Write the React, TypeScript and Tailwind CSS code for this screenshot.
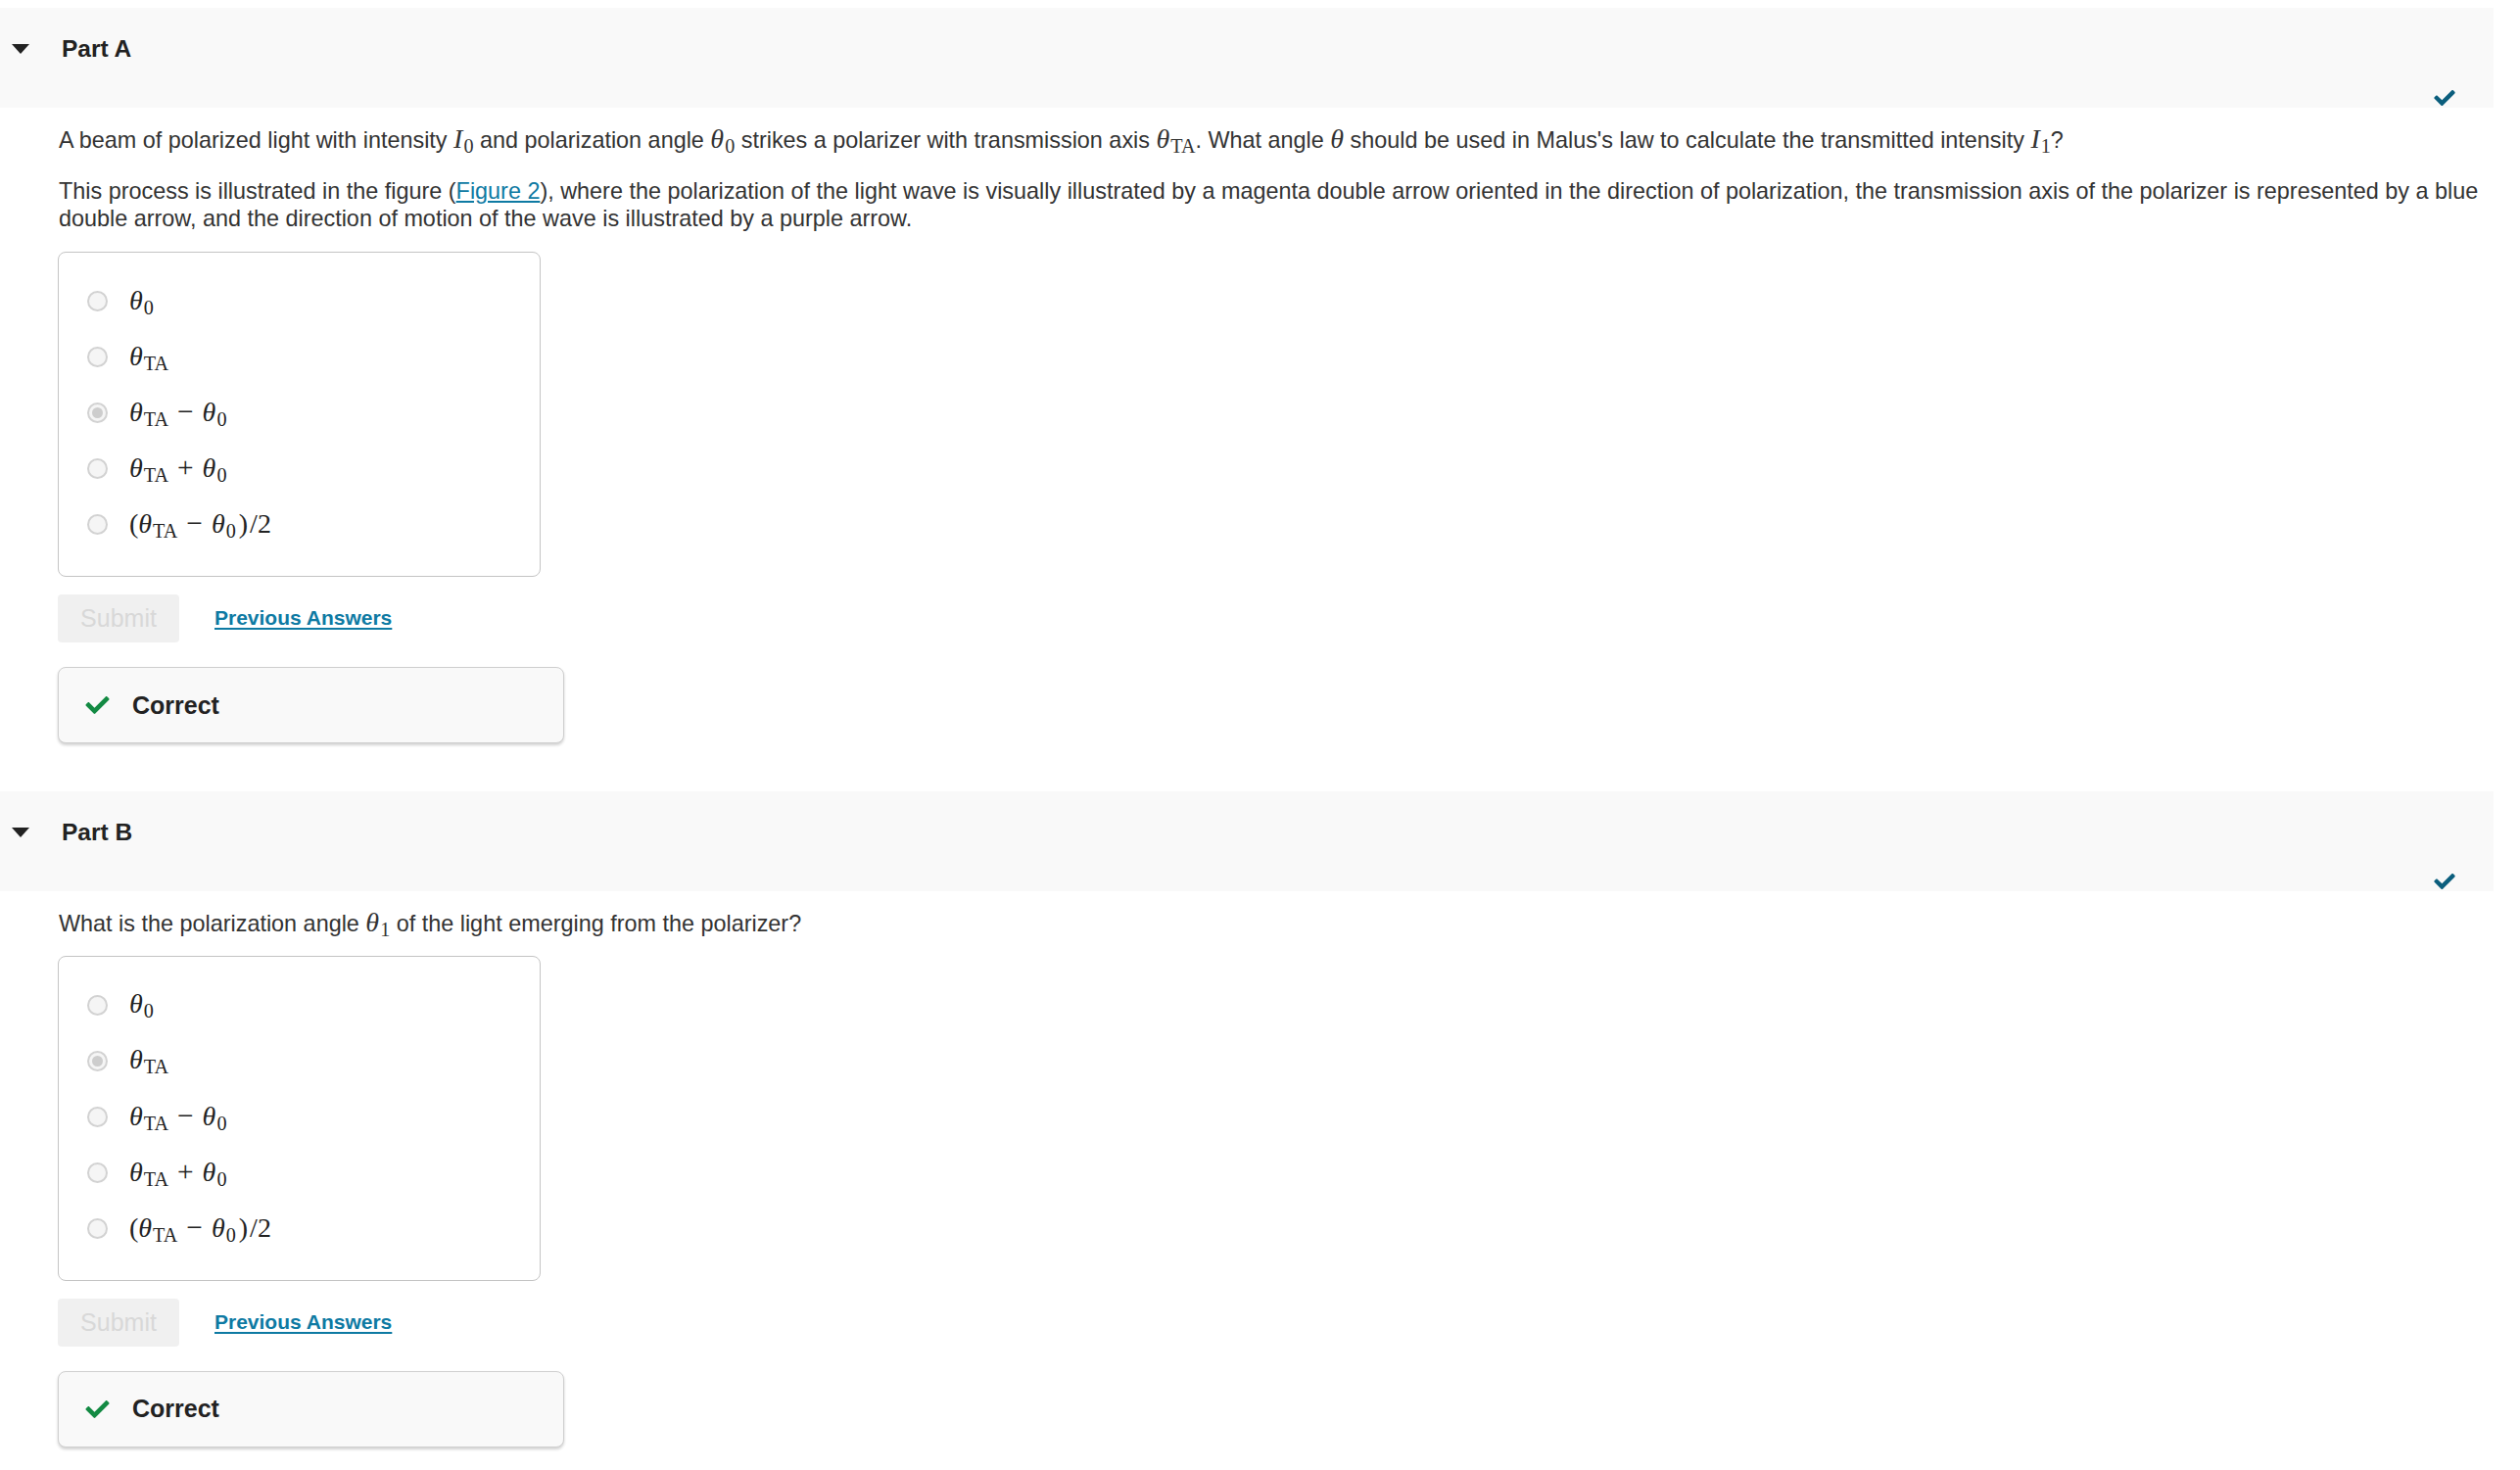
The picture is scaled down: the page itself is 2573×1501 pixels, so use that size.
import React from 'react'

/* ─── Math bits ─────────────────────────────────────────────────────────────── */

function V({ children }: { children: React.ReactNode }) {
  return <span className="font-['Liberation_Serif',serif] italic">{children}</span>
}

function Sub({ children }: { children: React.ReactNode }) {
  return (
    <span className="relative top-[5px] ml-[1px] font-['Liberation_Serif',serif] text-[0.72em] not-italic">
      {children}
    </span>
  )
}

function Op({ children }: { children: React.ReactNode }) {
  return <span className="mx-[9px] font-['Liberation_Serif',serif] text-[1.05em]">{children}</span>
}

const T0 = () => (
  <>
    <V>θ</V>
    <Sub>0</Sub>
  </>
)

const TTA = () => (
  <>
    <V>θ</V>
    <Sub>TA</Sub>
  </>
)

const OPTIONS: React.ReactNode[] = [
  <T0 />,
  <TTA />,
  <>
    <TTA />
    <Op>−</Op>
    <T0 />
  </>,
  <>
    <TTA />
    <Op>+</Op>
    <T0 />
  </>,
  <>
    <span className="font-['Liberation_Serif',serif]">(</span>
    <TTA />
    <Op>−</Op>
    <T0 />
    <span className="ml-[3px] font-['Liberation_Serif',serif]">)</span>
    <span className="ml-[2px] font-['Liberation_Serif',serif]">/2</span>
  </>,
]

/* ─── Icons ─────────────────────────────────────────────────────────────────── */

const CHECK_D =
  'M173.898 439.404l-166.4-166.4c-9.997-9.997-9.997-26.206 0-36.204l36.203-36.204c9.997-9.998 26.207-9.998 36.204 0L192 312.69 432.095 72.596c9.997-9.997 26.207-9.997 36.204 0l36.203 36.204c9.997 9.997 9.997 26.206 0 36.204l-294.4 294.401c-9.998 9.997-26.207 9.997-36.204-.001z'

function Check({ className, color }: { className: string; color: string }) {
  return (
    <svg viewBox="0 64 512 384" className={className} aria-hidden="true">
      <path d={CHECK_D} fill={color} />
    </svg>
  )
}

/* ─── Pieces ────────────────────────────────────────────────────────────────── */

function PartHeader({ title }: { title: string }) {
  return (
    <div className="relative h-[102px] bg-[#f9f9f9] pl-[12px] pt-[27px]">
      <div className="flex h-[30px] items-center">
        <svg width="18" height="10" viewBox="0 0 18 10" aria-hidden="true">
          <path d="M0 0h18L9 10z" fill="#222" />
        </svg>
        <span className="ml-[33px] text-[24.5px] font-bold leading-[30px] text-[#222]">{title}</span>
      </div>
      <Check className="absolute bottom-[2px] right-[39px] h-[16px] w-[22px]" color="#0b5e7d" />
    </div>
  )
}

function Radio({ checked }: { checked: boolean }) {
  return (
    <div className="flex h-[21px] w-[21px] shrink-0 items-center justify-center rounded-full border-2 border-[#d2d2d2] bg-[#f5f5f5]">
      {checked && <div className="h-[11px] w-[11px] rounded-full bg-[#cdcdcd]" />}
    </div>
  )
}

function Choices({ selected }: { selected: number }) {
  return (
    <div className="h-[332px] w-[493px] rounded-[8px] border border-[#c4c4c4] pl-[29px] pt-[21px]">
      {OPTIONS.map((opt, i) => (
        <div key={i} className="flex h-[57px] items-center gap-[22px]">
          <Radio checked={i === selected} />
          <span className="text-[28px] leading-[30px] text-[#222]">{opt}</span>
        </div>
      ))}
    </div>
  )
}

function Actions() {
  return (
    <>
      <div className="mt-[18px] flex items-center gap-[36px]">
        <div className="flex h-[49px] w-[124px] items-center justify-center rounded-[4px] bg-[#f0f0f0] text-[25px] text-[#d8d8d8]">
          Submit
        </div>
        <a className="text-[21px] font-bold text-[#0e7aa3] underline underline-offset-[3px]">
          Previous Answers
        </a>
      </div>
      <div className="mt-[25px] flex h-[78px] w-[517px] items-center rounded-[8px] border border-[#cfcfcf] bg-[#f9f9f9] pl-[27px] shadow-[0_2px_3px_rgba(0,0,0,0.18)]">
        <Check className="h-[18px] w-[25px]" color="#138a43" />
        <span className="ml-[23px] text-[25px] font-bold text-[#222]">Correct</span>
      </div>
    </>
  )
}

/* ─── Page ──────────────────────────────────────────────────────────────────── */

export default function App() {
  return (
    <div className="w-[2546px] bg-white pt-[8px] font-['Liberation_Sans',Arial,sans-serif] text-[#333]">
      <PartHeader title="Part A" />
      <div className="pl-[60px] text-[23.4px] leading-[28.7px]">
        <p className="mt-[18px]">
          A beam of polarized light with intensity{' '}
          <span className="text-[28px]">
            <V>I</V>
            <Sub>0</Sub>
          </span>{' '}
          and polarization angle{' '}
          <span className="text-[28px]">
            <T0 />
          </span>{' '}
          strikes a polarizer with transmission axis{' '}
          <span className="text-[28px]">
            <TTA />
          </span>
          . What angle{' '}
          <span className="text-[28px]">
            <V>θ</V>
          </span>{' '}
          should be used in Malus's law to calculate the transmitted intensity{' '}
          <span className="text-[28px]">
            <V>I</V>
            <Sub>1</Sub>
          </span>
          ?
        </p>
        <p className="mt-[22px]">
          This process is illustrated in the figure (
          <a className="text-[#0e7aa3] underline">Figure 2</a>), where the polarization of the light
          wave is visually illustrated by a magenta double arrow oriented in the direction of
          polarization, the transmission axis of the polarizer is represented by a blue double arrow,
          and the direction of motion of the wave is illustrated by a purple arrow.
        </p>
        <div className="mt-[19px] -ml-[1px]">
          <Choices selected={2} />
          <Actions />
        </div>
      </div>

      <div className="mt-[49px]">
        <PartHeader title="Part B" />
      </div>
      <div className="pl-[60px] text-[23.4px] leading-[28.7px]">
        <p className="mt-[18px]">
          What is the polarization angle{' '}
          <span className="text-[28px]">
            <V>θ</V>
            <Sub>1</Sub>
          </span>{' '}
          of the light emerging from the polarizer?
        </p>
        <div className="mt-[17px] -ml-[1px] pb-[25px]">
          <Choices selected={1} />
          <Actions />
        </div>
      </div>
    </div>
  )
}
